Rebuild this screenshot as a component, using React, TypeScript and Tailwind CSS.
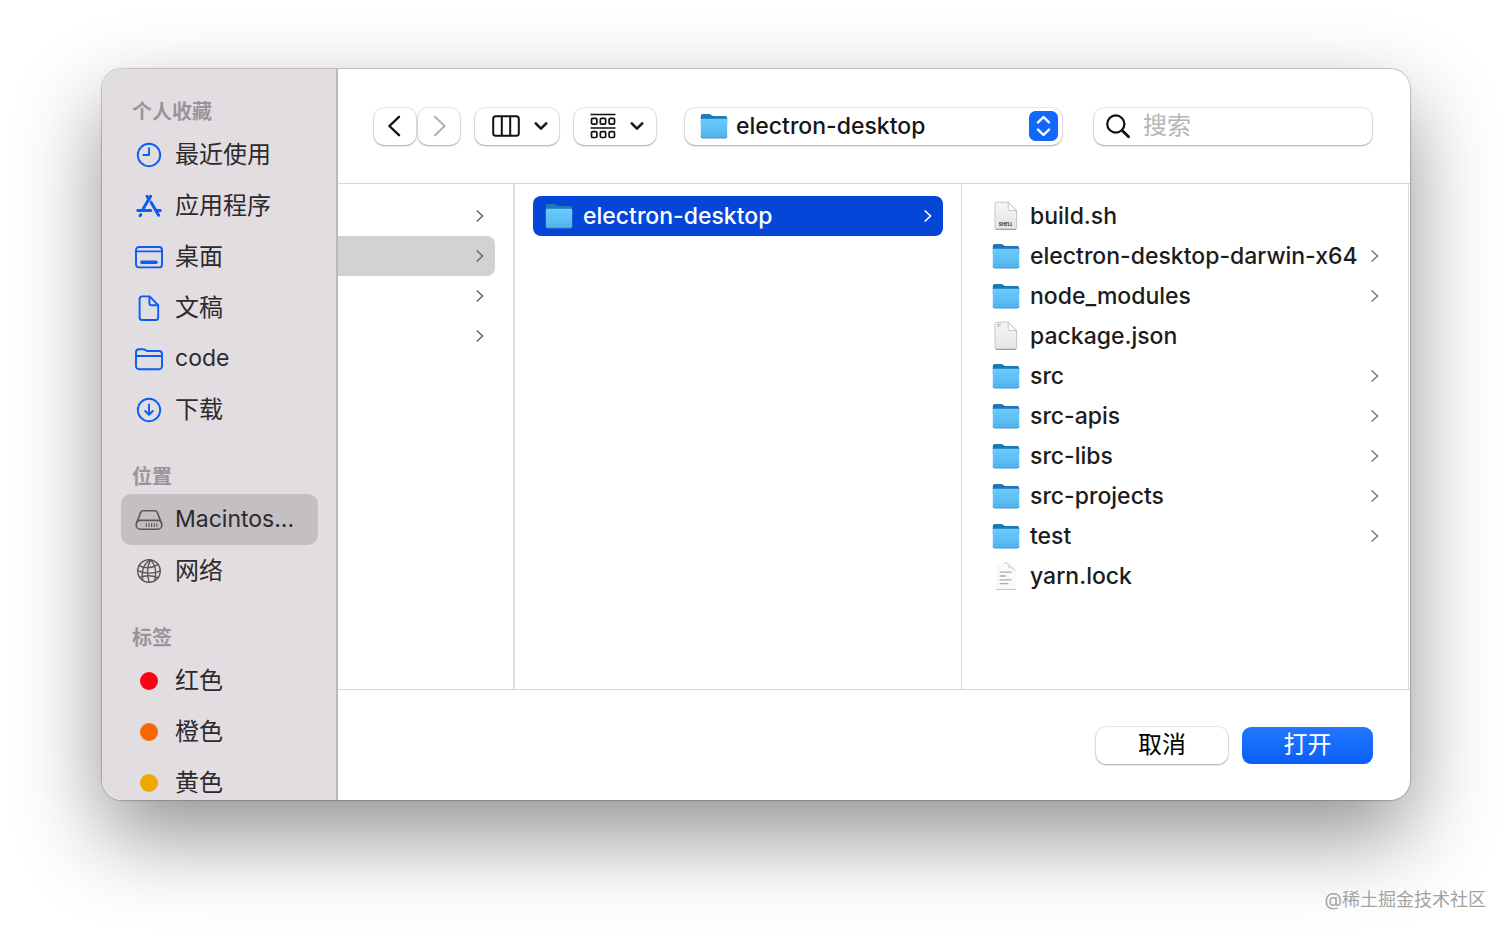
import type { ReactNode } from 'react'

type Entry = { name: string; kind: 'folder' | 'shell' | 'json' | 'text' }

const files: Entry[] = [
  { name: 'build.sh', kind: 'shell' },
  { name: 'electron-desktop-darwin-x64', kind: 'folder' },
  { name: 'node_modules', kind: 'folder' },
  { name: 'package.json', kind: 'json' },
  { name: 'src', kind: 'folder' },
  { name: 'src-apis', kind: 'folder' },
  { name: 'src-libs', kind: 'folder' },
  { name: 'src-projects', kind: 'folder' },
  { name: 'test', kind: 'folder' },
  { name: 'yarn.lock', kind: 'text' },
]

const parents = [false, true, false, false]

const blue = { fill: 'none', stroke: '#0a5cf5', strokeWidth: 1.9, strokeLinecap: 'round', strokeLinejoin: 'round' } as const
const gray = { fill: 'none', stroke: '#5b585c', strokeWidth: 1.6, strokeLinecap: 'round', strokeLinejoin: 'round' } as const

const ClockIcon = () => (
  <svg width="28" height="28" viewBox="0 0 28 28" {...blue}>
    <circle cx="14" cy="14" r="11.2" />
    <path d="M14 7.2V14H8.4" />
  </svg>
)

const AppsIcon = () => (
  <svg width="28" height="28" viewBox="0 0 28 28" {...blue} strokeWidth={3}>
    <path d="M15.6 4.2 8.2 16.8M12 4.2l2 3.4M16.2 10.4l7.4 12.8" />
    <path d="M2.8 18.4h13M21.4 18.4h3.8M5.8 22.6l-.8 1.1" />
  </svg>
)

const DesktopIcon = () => (
  <svg width="28" height="28" viewBox="0 0 28 28" {...blue}>
    <rect x="1" y="4" width="26" height="20.4" rx="3" />
    <path d="M1 8.4h26" />
    <path d="M7 19.3h14" strokeWidth="3.6" />
  </svg>
)

const DocIcon = () => (
  <svg width="28" height="28" viewBox="0 0 28 28" {...blue}>
    <path d="M7.2 2.4h7.4l8.6 8.8v12.2a2.6 2.6 0 0 1-2.6 2.6H7.2a2.6 2.6 0 0 1-2.6-2.6V5a2.6 2.6 0 0 1 2.6-2.6z" />
    <path d="M14.4 2.6v6.6a2 2 0 0 0 2 2H23" />
  </svg>
)

const FolderLineIcon = () => (
  <svg width="28" height="28" viewBox="0 0 28 28" {...blue}>
    <path d="M1 7.2a3 3 0 0 1 3-3h4.2c1.800 0 2.200 1.800 4 1.800H24a3 3 0 0 1 3 3v12.200a3 3 0 0 1-3 3H4a3 3 0 0 1-3-3z" />
    <path d="M1 11h26" />
  </svg>
)

const DownloadIcon = () => (
  <svg width="28" height="28" viewBox="0 0 28 28" {...blue}>
    <circle cx="14" cy="14" r="11.2" />
    <path d="M14 8.4v10.4M10.2 15l3.8 3.8 3.8-3.8" />
  </svg>
)

const DriveIcon = () => (
  <svg width="28" height="28" viewBox="0 0 28 28" {...gray}>
    <path d="M1.8 16.600 5.600 6.600a2.800 2.800 0 0 1 2.600-1.800h11.600a2.800 2.800 0 0 1 2.600 1.800l3.800 10" />
    <rect x="1.2" y="14.4" width="25.6" height="8.8" rx="4" />
    <path d="M11.4 17.6v2.8M14 17.6v2.8M16.6 17.6v2.8M19.2 17.6v2.8M21.8 17.6v2.8" strokeWidth="1.1" />
  </svg>
)

const GlobeIcon = () => (
  <svg width="28" height="28" viewBox="0 0 28 28" {...gray} strokeWidth={1.4}>
    <circle cx="14" cy="14" r="11.3" />
    <path d="M15.6 2.8c-3.4 6.4-3.9 14.8-1.4 22.4M15.6 2.8c-6.2 3.4-9.4 10.4-8 19.8M15.6 2.8c4.6 4.6 6 12.4 4.2 20.4" />
    <path d="M4 8.6c5.6 2.8 13 2.6 18.8-1M2.8 13.6c6.4 3.2 16 3.4 22.4.2M4.8 20.4c5.4-2 13-1.8 18.6.4" />
  </svg>
)

const Dot = ({ color }: { color: string }) => (
  <svg width="28" height="28" viewBox="0 0 28 28">
    <circle cx="14" cy="14" r="9" fill={color} />
  </svg>
)

const places: { title: string; items: { label: string; icon: ReactNode; latin?: boolean; active?: boolean }[] }[] = [
  {
    title: '个人收藏',
    items: [
      { label: '最近使用', icon: <ClockIcon /> },
      { label: '应用程序', icon: <AppsIcon /> },
      { label: '桌面', icon: <DesktopIcon /> },
      { label: '文稿', icon: <DocIcon /> },
      { label: 'code', icon: <FolderLineIcon />, latin: true },
      { label: '下载', icon: <DownloadIcon /> },
    ],
  },
  {
    title: '位置',
    items: [
      { label: 'Macintos...', icon: <DriveIcon />, latin: true, active: true },
      { label: '网络', icon: <GlobeIcon /> },
    ],
  },
  {
    title: '标签',
    items: [
      { label: '红色', icon: <Dot color="#ff0016" /> },
      { label: '橙色', icon: <Dot color="#f76900" /> },
      { label: '黄色', icon: <Dot color="#eda900" /> },
    ],
  },
]

const FolderIcon = () => (
  <svg className="shrink-0" width="28" height="28" viewBox="0 0 28 28">
    <defs>
      <linearGradient id="folder-front" x1="0" y1="0" x2="0" y2="1">
        <stop offset="0" stopColor="#6ccbfc" />
        <stop offset="1" stopColor="#52b5ee" />
      </linearGradient>
    </defs>
    <path d="M.8 4a2 2 0 0 1 2-2h6.4c1.6 0 2.2 1.9 4 1.9h12a2 2 0 0 1 2 2V12H.8z" fill="#1d77b8" />
    <path d="M.8 8.2a1.4 1.4 0 0 1 1.4-1.4h23.6a1.4 1.4 0 0 1 1.4 1.4v16a1.8 1.8 0 0 1-1.800 1.800H2.600a1.800 1.800 0 0 1-1.800-1.800z" fill="url(#folder-front)" />
    <path d="M1 24.4a1.8 1.8 0 0 0 1.6 1.600h22.800a1.800 1.800 0 0 0 1.600-1.600" fill="none" stroke="#3f93c6" strokeWidth="1" />
    <path d="M1.6 22.500h24.800" stroke="#4fabe2" strokeWidth=".5" />
  </svg>
)

const FileIcon = ({ kind }: { kind: Entry['kind'] }) => {
  if (kind === 'text') {
    return (
      <svg className="shrink-0" width="28" height="28" viewBox="0 0 28 28">
        <path d="M4 1h12l8 8v18H4z" fill="#fafafa" />
        <path d="M12 .8c3.400 0 4.600 1.800 4.600 5 3.200-.2 5.400.8 6.800 3.200L16 1z" fill="#ebebeb" stroke="#cfcfcf" strokeWidth=".8" />
        <path d="M7.6 10.2h12M7.6 14h6.4M7.6 17.800h12M7.6 21.600h8.800" stroke="#aaa" strokeWidth="1.3" />
        <path d="M3.8 27.4h20.400" stroke="#c4c4c4" strokeWidth="1" />
      </svg>
    )
  }
  return (
    <svg className="shrink-0" width="28" height="30" viewBox="0 0 28 30">
      <defs>
        <linearGradient id="paper" x1="0" y1="0" x2="0" y2="1">
          <stop offset="0" stopColor="#f6f6f6" />
          <stop offset="1" stopColor="#e4e4e4" />
        </linearGradient>
      </defs>
      <path d="M4.4 1.2h11.800l8.400 8.400v17.200a1.400 1.400 0 0 1-1.400 1.400H4.400A1.400 1.400 0 0 1 3 26.800V2.600a1.400 1.400 0 0 1 1.400-1.400z" fill="url(#paper)" stroke="#c0c0c0" strokeWidth=".9" />
      <path d="M16.2 1.4v6.800a1.400 1.400 0 0 0 1.400 1.400h6.800z" fill="#fff" stroke="#b4b4b4" strokeWidth=".8" />
      <path d="M3.8 28.400h20.200" stroke="#989898" strokeWidth="1" />
      {kind === 'shell' && (
        <text x="13.8" y="25" textAnchor="middle" fontSize="4.5" fontWeight="800" fill="#444">SHELL</text>
      )}
      {kind === 'json' && <path d="M5 3.4h4M5 5.200h2.400" stroke="#aaa" strokeWidth="1" />}
    </svg>
  )
}

const RowChevron = ({ className }: { className: string }) => (
  <svg className={`shrink-0 ${className}`} width="10" height="14" viewBox="0 0 10 14" fill="none" stroke="currentColor" strokeWidth="1.7" strokeLinecap="round" strokeLinejoin="round">
    <path d="m2.2 2 5.400 5-5.400 5" />
  </svg>
)

const DownChevron = () => (
  <svg width="14" height="10" viewBox="0 0 14 10" fill="none" stroke="#1a1a1a" strokeWidth="2.6" strokeLinecap="round" strokeLinejoin="round">
    <path d="m1.8 2.400 5.200 5.200 5.200-5.200" />
  </svg>
)

const raised = 'h-[37px] rounded-[10px] bg-white shadow-[0_0_0_1px_rgba(0,0,0,0.07),0_1px_2px_rgba(0,0,0,0.3)]'

function Sidebar() {
  return (
    <nav className="w-[236px] shrink-0 overflow-hidden border-r-2 border-[#bdb8bd] bg-[#e2dde1] pt-[26px]">
      {places.map((group) => (
        <section key={group.title} className="mb-[25px] pr-[18px] pl-[19px]">
          <h2 className="flex h-[34px] items-center pl-[11px] text-[20px] font-bold text-[#9a959a]">{group.title}</h2>
          {group.items.map((item) => (
            <button
              key={item.label}
              type="button"
              className={`flex h-[51px] w-full items-center gap-3 rounded-[10px] pl-[14px] text-left whitespace-nowrap text-[#2c2a2d] ${item.latin ? 'text-[23px]' : 'text-[24px]'} ${item.active ? 'bg-[#c4bfc3]' : ''}`}
            >
              {item.icon}
              {item.label}
            </button>
          ))}
        </section>
      ))}
    </nav>
  )
}

function Toolbar() {
  return (
    <header className="flex h-[115px] shrink-0 items-center border-b border-[#d6d6d6] pr-[38px] pl-9">
      <div className="flex gap-0.5">
        <button type="button" aria-label="后退" className={`${raised} flex w-[42px] items-center justify-center`}>
          <svg width="14" height="22" viewBox="0 0 14 22" fill="none" stroke="#111" strokeWidth="2.3" strokeLinecap="round" strokeLinejoin="round">
            <path d="M11 1.800 1.400 11l9.600 9.200" />
          </svg>
        </button>
        <button type="button" aria-label="前进" className={`${raised} flex w-[42px] items-center justify-center`}>
          <svg width="14" height="22" viewBox="0 0 14 22" fill="none" stroke="#b0b0b0" strokeWidth="2" strokeLinecap="round" strokeLinejoin="round">
            <path d="M3 1.800 12.600 11 3 20.200" />
          </svg>
        </button>
      </div>

      <button type="button" aria-label="分栏显示" aria-haspopup="menu" className={`${raised} ml-[15px] flex w-[84px] items-center gap-[14px] pl-[17px]`}>
        <svg width="28" height="22" viewBox="0 0 28 22" fill="none" stroke="#111" strokeWidth="2">
          <rect x="1.2" y="1.2" width="25.600" height="19.600" rx="2.600" />
          <path d="M9.8 1.200v19.600M18.200 1.200v19.600" />
        </svg>
        <DownChevron />
      </button>

      <button type="button" aria-label="分组方式" aria-haspopup="menu" className={`${raised} ml-[15px] flex w-[82px] items-center gap-[14px] pl-4`}>
        <svg width="26" height="26" viewBox="0 0 26 26" fill="none" stroke="#111" strokeWidth="1.7">
          <path d="M.5 1.500h25M.5 15h25" />
          <rect x="1.5" y="5.3" width="5.4" height="5.8" rx="1.2" />
          <rect x="10.3" y="5.3" width="5.4" height="5.8" rx="1.2" />
          <rect x="19.1" y="5.3" width="5.4" height="5.8" rx="1.2" />
          <rect x="1.5" y="18.7" width="5.4" height="5.8" rx="1.2" />
          <rect x="10.3" y="18.7" width="5.4" height="5.8" rx="1.2" />
          <rect x="19.1" y="18.7" width="5.4" height="5.8" rx="1.2" />
        </svg>
        <DownChevron />
      </button>

      <label className="relative ml-[29px] flex-1">
        <span className="pointer-events-none absolute inset-y-0 left-[15px] flex items-center">
          <FolderIcon />
        </span>
        <select aria-label="位置" className={`${raised} block w-full appearance-none pr-12 pl-[51px] text-[23px] font-[450] text-[#161616]`}>
          <option>electron-desktop</option>
        </select>
        <span className="pointer-events-none absolute inset-y-0 right-1 flex items-center">
          <svg width="29" height="30" viewBox="0 0 29 30" fill="none" stroke="#fff" strokeWidth="2.4" strokeLinecap="round" strokeLinejoin="round">
            <rect width="29" height="30" rx="6.5" fill="#1268fb" stroke="none" />
            <path d="m9 11.400 5.500-5.400 5.500 5.400M9 18.600l5.500 5.400 5.500-5.400" />
          </svg>
        </span>
      </label>

      <label className={`${raised} ml-8 flex w-[278px] items-center gap-3 pl-[11px]`}>
        <svg className="shrink-0" width="26" height="26" viewBox="0 0 26 26" fill="none" stroke="#111" strokeWidth="2.2" strokeLinecap="round">
          <circle cx="10.8" cy="11" r="8.6" />
          <path d="m17.2 17.400 6.400 6.400" strokeWidth="2.8" />
        </svg>
        <input type="search" aria-label="搜索" placeholder="搜索" className="min-w-0 flex-1 bg-transparent text-[24px] outline-none placeholder:text-[#b5b5b5]" />
      </label>
    </header>
  )
}

function Columns() {
  return (
    <div className="flex min-h-0 flex-1 pr-px">
      <ul className="w-[177px] shrink-0 border-r-2 border-[#dedede] pt-3 pr-[18px]">
        {parents.map((selected, i) => (
          <li key={i}>
            <button
              type="button"
              aria-label={`文件夹 ${i + 1}`}
              className={`flex h-10 w-full items-center justify-end rounded-r-lg pr-[10px] ${selected ? 'bg-[#d2d2d2]' : ''}`}
            >
              <RowChevron className="text-[#6b6b6b]" />
            </button>
          </li>
        ))}
      </ul>

      <ul className="min-w-0 flex-1 border-r border-[#d8d8d8] px-[18px] pt-3">
        <li>
          <button type="button" className="flex h-10 w-full items-center gap-[10px] rounded-lg bg-[#0546d8] pr-[10px] pl-3 text-left text-[23px] font-[450] text-white">
            <FolderIcon />
            <span className="flex-1">electron-desktop</span>
            <RowChevron className="text-white" />
          </button>
        </li>
      </ul>

      <ul className="min-w-0 flex-1 border-r border-[#dedede] px-[18px] pt-3">
        {files.map((file) => (
          <li key={file.name}>
            <button type="button" className="flex h-10 w-full items-center gap-[10px] pr-[10px] pl-3 text-left text-[23px] font-[450] whitespace-nowrap text-[#1c1c1c]">
              {file.kind === 'folder' ? <FolderIcon /> : <FileIcon kind={file.kind} />}
              <span className="min-w-0 flex-1">{file.name}</span>
              {file.kind === 'folder' && <RowChevron className="text-[#7d7d7d]" />}
            </button>
          </li>
        ))}
      </ul>
    </div>
  )
}

export default function App() {
  return (
    <div className="relative flex h-screen flex-col overflow-hidden bg-white px-[102px] pt-[69px] pb-[135px] font-['Inter','Noto_Sans_CJK_SC',sans-serif]">
      <main className="flex min-h-0 flex-1 overflow-hidden rounded-[20px] bg-white shadow-[0_0_1px_1px_rgba(0,0,0,0.2),0_36px_86px_rgba(0,0,0,0.43)]">
        <Sidebar />
        <div className="flex min-w-0 flex-1 flex-col">
          <Toolbar />
          <Columns />
          <footer className="flex h-[111px] shrink-0 items-center justify-end gap-[14px] border-t border-[#d6d6d6] pr-[37px]">
            <button type="button" className={`${raised} w-[132px] text-[24px] text-black`}>取消</button>
            <button type="button" className="h-[37px] w-[131px] rounded-[9px] bg-linear-to-b from-[#2277fd] to-[#0a5efa] text-[24px] text-white">打开</button>
          </footer>
        </div>
      </main>

      <p className="absolute right-[26px] bottom-[22px] text-[18px] text-[#a3a3a3] [text-shadow:-1px_-1px_0_#fff]">@稀土掘金技术社区</p>
    </div>
  )
}
